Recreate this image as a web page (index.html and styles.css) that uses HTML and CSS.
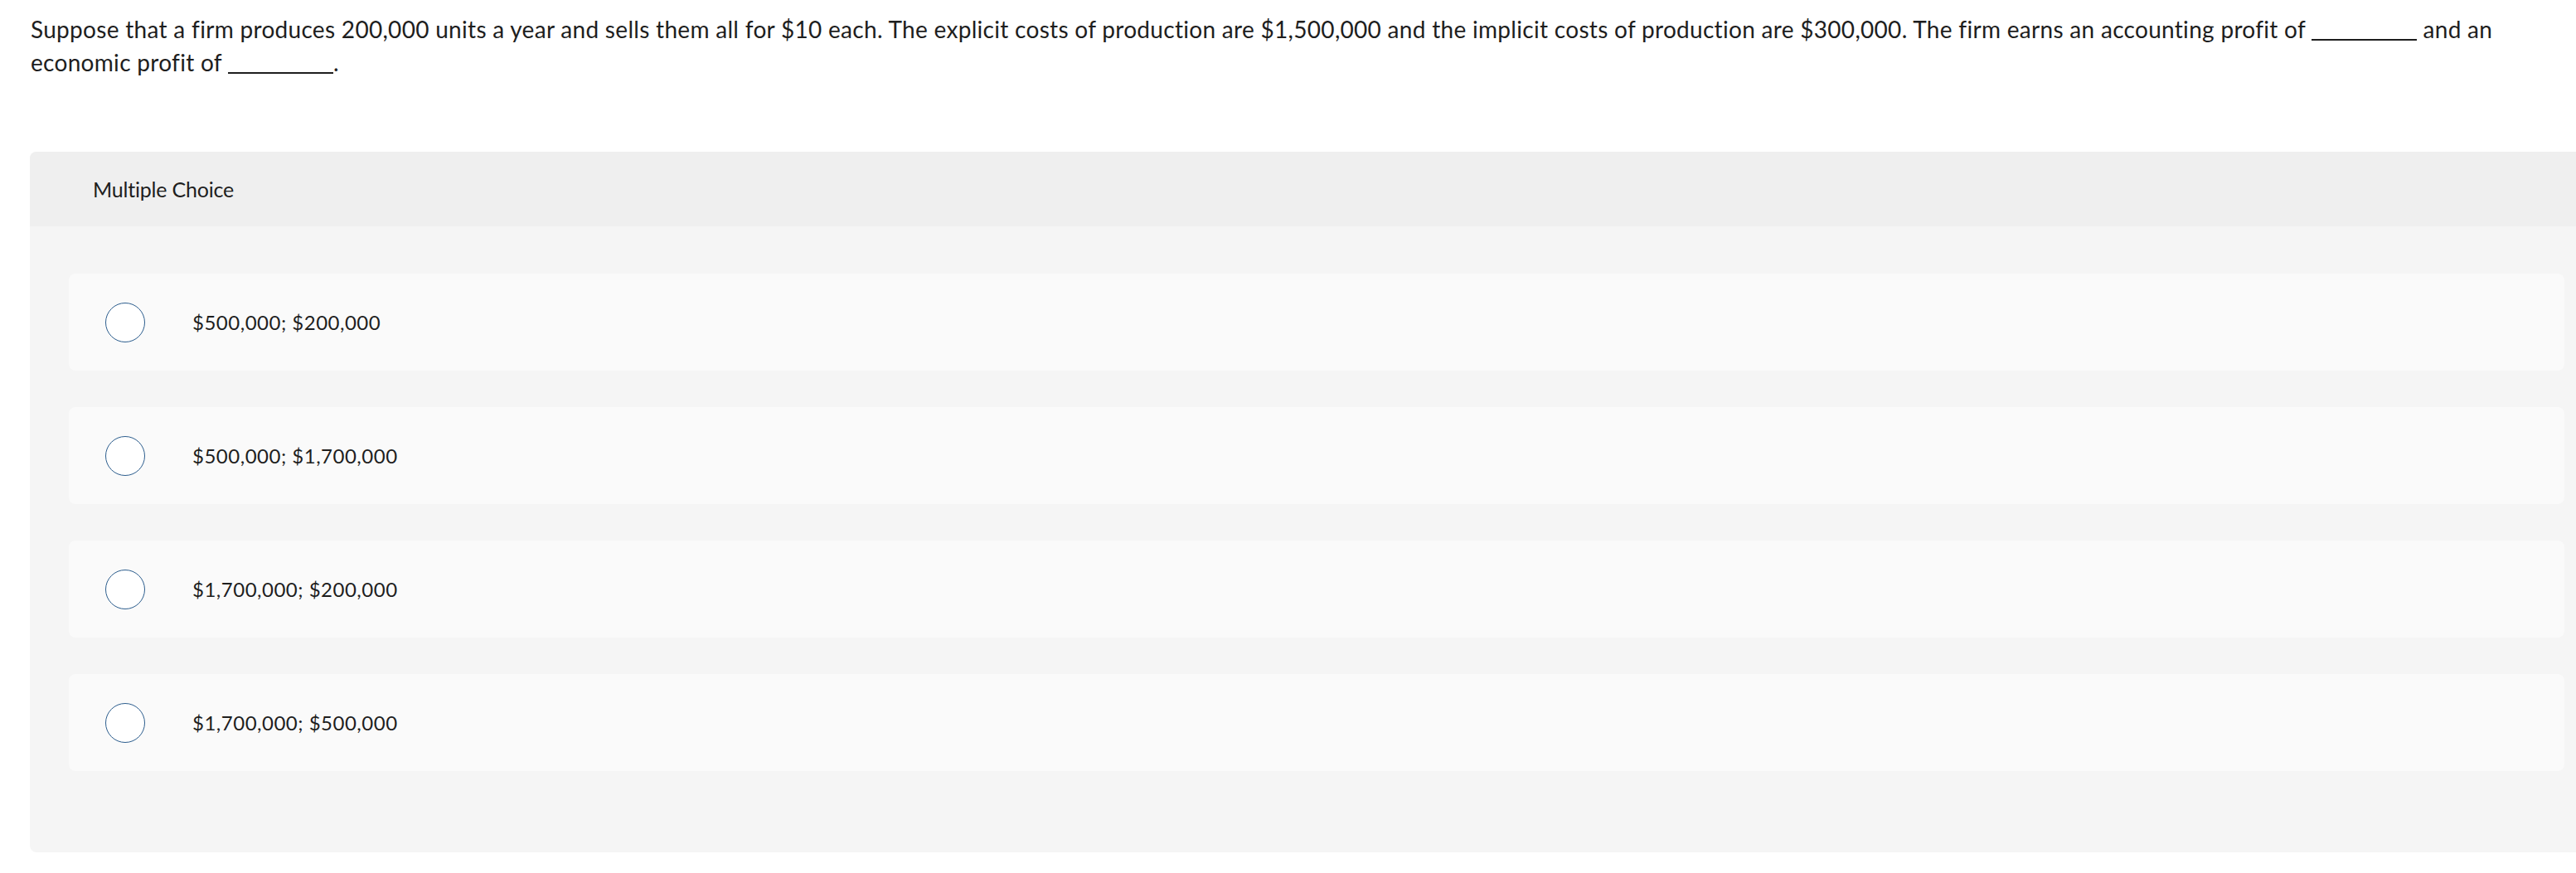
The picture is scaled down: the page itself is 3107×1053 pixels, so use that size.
FILE: index.html
```html
<!DOCTYPE html>
<html lang="en">
<head>
<meta charset="utf-8">
<title>Multiple Choice</title>
<link rel="stylesheet" href="styles.css">
</head>
<body>
<p class="question">Suppose that a firm produces 200,000 units a year and sells them all for $10 each. The explicit costs of production are $1,500,000 and the implicit costs of production are $300,000. The firm earns an accounting profit of <span class="blank"></span> and an economic profit of <span class="blank"></span>.</p>
<section class="card">
  <header class="card-header">Multiple Choice</header>
  <div class="options">
    <label class="option"><span class="radio"></span><span class="option-text">$500,000; $200,000</span></label>
    <label class="option"><span class="radio"></span><span class="option-text">$500,000; $1,700,000</span></label>
    <label class="option"><span class="radio"></span><span class="option-text">$1,700,000; $200,000</span></label>
    <label class="option"><span class="radio"></span><span class="option-text">$1,700,000; $500,000</span></label>
  </div>
</section>
</body>
</html>
```

FILE: styles.css
```css
html, body {
  margin: 0;
  padding: 0;
  background: #ffffff;
}

body {
  font-family: "Lato", "Liberation Sans", sans-serif;
  color: #1e1e1e;
  overflow-x: hidden;
  font-variant-ligatures: none;
}

.question {
  margin: 0;
  padding: 15px 60px 0 37px;
  font-size: 28px;
  line-height: 40px;
  letter-spacing: 0.3px;
}

.blank {
  display: inline-block;
  width: 127px;
  border-bottom: 2px solid #1e1e1e;
  vertical-align: -3px;
}

.card {
  margin: 88px 0 0 36px;
  background: #f5f5f5;
  border-radius: 8px 0 0 8px;
}

.card-header {
  height: 90px;
  display: flex;
  align-items: center;
  padding-left: 76px;
  background: #efefef;
  border-radius: 8px 0 0 0;
  font-size: 25px;
  letter-spacing: -0.2px;
}

.options {
  display: flex;
  flex-direction: column;
  gap: 44px;
  padding: 57px 14px 98px 47px;
}

.option {
  height: 117px;
  display: flex;
  align-items: center;
  padding-left: 44px;
  background: #fafafa;
  border-radius: 8px;
}

.radio {
  width: 48px;
  height: 48px;
  box-sizing: border-box;
  border: 1.5px solid #2d5e8e;
  border-radius: 50%;
  background: #ffffff;
  flex: none;
  margin-right: 57px;
}

.option-text {
  font-size: 24px;
  letter-spacing: 0.5px;
}
```
